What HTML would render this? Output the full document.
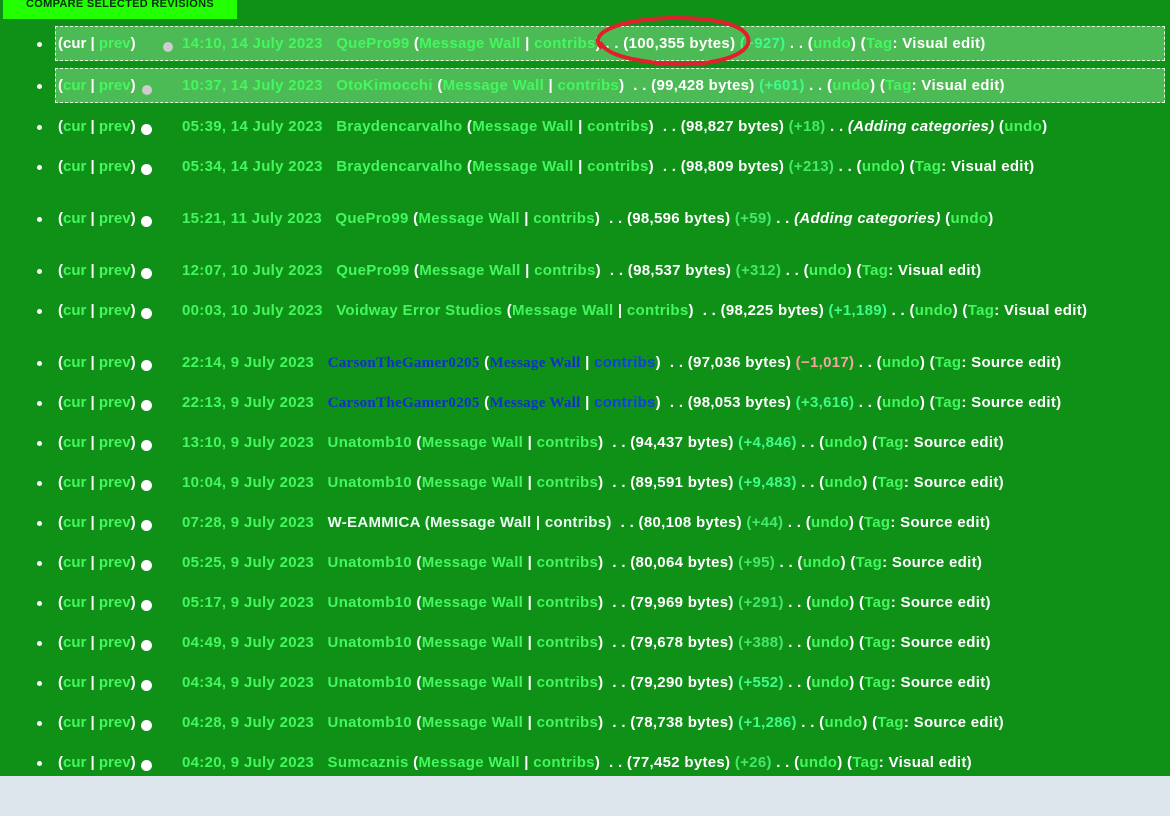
<!DOCTYPE html>
<html><head><meta charset="utf-8"><style>
body{margin:0;width:1170px;height:816px;background:#0f9118;overflow:hidden;position:relative;font-family:"Liberation Sans",sans-serif;font-size:15px;font-weight:bold;color:#fff;}
.btn{position:absolute;left:3px;top:-8px;width:234px;height:27px;background:#22ff00;font-size:11px;font-weight:bold;letter-spacing:.3px;text-align:center;line-height:24px;color:#063010}
.row{position:absolute;left:58px;height:22px;line-height:22px;white-space:nowrap;}
.b{position:absolute;left:-21px;top:9px;width:5px;height:5px;border-radius:50%;background:#fff}
.g{color:#44f75e}
.d{color:#3dfc8a;font-weight:bold}
.dn{color:#44e86a}
.r{position:absolute;left:83px;top:8px;width:11px;height:11px;border-radius:50%;background:#fff}
.t{position:absolute;left:124px;letter-spacing:0.3px}
.p{letter-spacing:0}
.hl{position:absolute;left:55px;width:1108px;height:33px;background:#4dbb55;border:1px dashed #e8ffe8}
.bot{position:absolute;left:0;top:776px;width:1170px;height:40px;background:#dde6ec}
.blue{color:#1030d0;font-family:"Liberation Serif",serif}
i{font-style:italic}
</style></head><body>
<div class="btn">COMPARE SELECTED REVISIONS</div>
<div class="hl" style="top:26px"></div>
<div class="hl" style="top:68px"></div>

<div class="row" style="top:33px"><span class="b"></span>(cur | <span class="g">prev</span>)<span class="r" style="left:105px;top:9px;width:10px;height:10px;background:#ccc"></span><span class="t"><span class="g">14:10, 14 July 2023&nbsp;&nbsp; QuePro99</span> (<span class="g">Message Wall</span> | <span class="g">contribs</span>) . . (100,355 bytes) <span class="d">(+927)</span> . . (<span class="g">undo</span>) (<span class="g">Tag</span>: Visual edit)</span></div>
<div class="row" style="top:75px"><span class="b"></span>(<span class="g">cur</span> | <span class="g">prev</span>)<span class="r" style="left:84px;top:10px;width:10px;height:10px;background:#ccc"></span><span class="t"><span class="g">10:37, 14 July 2023&nbsp;&nbsp; OtoKimocchi</span> (<span class="g">Message Wall</span> | <span class="g">contribs</span>) &nbsp;. . (99,428 bytes) <span class="d">(+601)</span> . . (<span class="g">undo</span>) (<span class="g">Tag</span>: Visual edit)</span></div>
<div class="row" style="top:116px"><span class="b"></span>(<span class="g">cur</span> | <span class="g">prev</span>)<span class="r"></span><span class="t"><span class="g">05:39, 14 July 2023&nbsp;&nbsp; Braydencarvalho</span> (<span class="g">Message Wall</span> | <span class="g">contribs</span>) &nbsp;. . (98,827 bytes) <span class="dn">(+18)</span> . . <i>(Adding categories)</i> (<span class="g">undo</span>)</span></div>
<div class="row" style="top:156px"><span class="b"></span>(<span class="g">cur</span> | <span class="g">prev</span>)<span class="r"></span><span class="t"><span class="g">05:34, 14 July 2023&nbsp;&nbsp; Braydencarvalho</span> (<span class="g">Message Wall</span> | <span class="g">contribs</span>) &nbsp;. . (98,809 bytes) <span class="dn">(+213)</span> . . (<span class="g">undo</span>) (<span class="g">Tag</span>: Visual edit)</span></div>
<div class="row" style="top:208px"><span class="b"></span>(<span class="g">cur</span> | <span class="g">prev</span>)<span class="r"></span><span class="t"><span class="g">15:21, 11 July 2023&nbsp;&nbsp; QuePro99</span> (<span class="g">Message Wall</span> | <span class="g">contribs</span>) &nbsp;. . (98,596 bytes) <span class="dn">(+59)</span> . . <i>(Adding categories)</i> (<span class="g">undo</span>)</span></div>
<div class="row" style="top:260px"><span class="b"></span>(<span class="g">cur</span> | <span class="g">prev</span>)<span class="r"></span><span class="t"><span class="g">12:07, 10 July 2023&nbsp;&nbsp; QuePro99</span> (<span class="g">Message Wall</span> | <span class="g">contribs</span>) &nbsp;. . (98,537 bytes) <span class="dn">(+312)</span> . . (<span class="g">undo</span>) (<span class="g">Tag</span>: Visual edit)</span></div>
<div class="row" style="top:300px"><span class="b"></span>(<span class="g">cur</span> | <span class="g">prev</span>)<span class="r"></span><span class="t"><span class="g">00:03, 10 July 2023&nbsp;&nbsp; Voidway Error Studios</span> (<span class="g">Message Wall</span> | <span class="g">contribs</span>) &nbsp;. . (98,225 bytes) <span class="d">(+1,189)</span> . . (<span class="g">undo</span>) (<span class="g">Tag</span>: Visual edit)</span></div>
<div class="row" style="top:352px"><span class="b"></span>(<span class="g">cur</span> | <span class="g">prev</span>)<span class="r"></span><span class="t"><span class="g">22:14, 9 July 2023</span>&nbsp;&nbsp; <span class="blue">CarsonTheGamer0205</span> (<span class="blue">Message Wall</span> | <b style="color:#1040e0">contribs</b>) &nbsp;. . (97,036 bytes) <b style="color:#f6a3a0">(−1,017)</b> . . (<span class="g">undo</span>) (<span class="g">Tag</span>: Source edit)</span></div>
<div class="row" style="top:392px"><span class="b"></span>(<span class="g">cur</span> | <span class="g">prev</span>)<span class="r"></span><span class="t"><span class="g">22:13, 9 July 2023</span>&nbsp;&nbsp; <span class="blue">CarsonTheGamer0205</span> (<span class="blue">Message Wall</span> | <b style="color:#1040e0">contribs</b>) &nbsp;. . (98,053 bytes) <span class="d">(+3,616)</span> . . (<span class="g">undo</span>) (<span class="g">Tag</span>: Source edit)</span></div>
<div class="row" style="top:432px"><span class="b"></span>(<span class="g">cur</span> | <span class="g">prev</span>)<span class="r"></span><span class="t"><span class="g">13:10, 9 July 2023&nbsp;&nbsp; Unatomb10</span> (<span class="g">Message Wall</span> | <span class="g">contribs</span>) &nbsp;. . (94,437 bytes) <span class="d">(+4,846)</span> . . (<span class="g">undo</span>) (<span class="g">Tag</span>: Source edit)</span></div>
<div class="row" style="top:472px"><span class="b"></span>(<span class="g">cur</span> | <span class="g">prev</span>)<span class="r"></span><span class="t"><span class="g">10:04, 9 July 2023&nbsp;&nbsp; Unatomb10</span> (<span class="g">Message Wall</span> | <span class="g">contribs</span>) &nbsp;. . (89,591 bytes) <span class="d">(+9,483)</span> . . (<span class="g">undo</span>) (<span class="g">Tag</span>: Source edit)</span></div>
<div class="row" style="top:512px"><span class="b"></span>(<span class="g">cur</span> | <span class="g">prev</span>)<span class="r"></span><span class="t"><span class="g">07:28, 9 July 2023</span>&nbsp;&nbsp; <b style="color:#e8fff0">W-EAMMICA (Message Wall | contribs)</b> &nbsp;. . (80,108 bytes) <span class="dn">(+44)</span> . . (<span class="g">undo</span>) (<span class="g">Tag</span>: Source edit)</span></div>
<div class="row" style="top:552px"><span class="b"></span>(<span class="g">cur</span> | <span class="g">prev</span>)<span class="r"></span><span class="t"><span class="g">05:25, 9 July 2023&nbsp;&nbsp; Unatomb10</span> (<span class="g">Message Wall</span> | <span class="g">contribs</span>) &nbsp;. . (80,064 bytes) <span class="dn">(+95)</span> . . (<span class="g">undo</span>) (<span class="g">Tag</span>: Source edit)</span></div>
<div class="row" style="top:592px"><span class="b"></span>(<span class="g">cur</span> | <span class="g">prev</span>)<span class="r"></span><span class="t"><span class="g">05:17, 9 July 2023&nbsp;&nbsp; Unatomb10</span> (<span class="g">Message Wall</span> | <span class="g">contribs</span>) &nbsp;. . (79,969 bytes) <span class="dn">(+291)</span> . . (<span class="g">undo</span>) (<span class="g">Tag</span>: Source edit)</span></div>
<div class="row" style="top:632px"><span class="b"></span>(<span class="g">cur</span> | <span class="g">prev</span>)<span class="r"></span><span class="t"><span class="g">04:49, 9 July 2023&nbsp;&nbsp; Unatomb10</span> (<span class="g">Message Wall</span> | <span class="g">contribs</span>) &nbsp;. . (79,678 bytes) <span class="dn">(+388)</span> . . (<span class="g">undo</span>) (<span class="g">Tag</span>: Source edit)</span></div>
<div class="row" style="top:672px"><span class="b"></span>(<span class="g">cur</span> | <span class="g">prev</span>)<span class="r"></span><span class="t"><span class="g">04:34, 9 July 2023&nbsp;&nbsp; Unatomb10</span> (<span class="g">Message Wall</span> | <span class="g">contribs</span>) &nbsp;. . (79,290 bytes) <span class="d">(+552)</span> . . (<span class="g">undo</span>) (<span class="g">Tag</span>: Source edit)</span></div>
<div class="row" style="top:712px"><span class="b"></span>(<span class="g">cur</span> | <span class="g">prev</span>)<span class="r"></span><span class="t"><span class="g">04:28, 9 July 2023&nbsp;&nbsp; Unatomb10</span> (<span class="g">Message Wall</span> | <span class="g">contribs</span>) &nbsp;. . (78,738 bytes) <span class="d">(+1,286)</span> . . (<span class="g">undo</span>) (<span class="g">Tag</span>: Source edit)</span></div>
<div class="row" style="top:752px"><span class="b"></span>(<span class="g">cur</span> | <span class="g">prev</span>)<span class="r"></span><span class="t"><span class="g">04:20, 9 July 2023&nbsp;&nbsp; Sumcaznis</span> (<span class="g">Message Wall</span> | <span class="g">contribs</span>) &nbsp;. . (77,452 bytes) <span class="dn">(+26)</span> . . (<span class="g">undo</span>) (<span class="g">Tag</span>: Visual edit)</span></div>

<svg style="position:absolute;left:580px;top:12px" width="180" height="60"><path d="M22 36 C 8 24, 30 8, 90 6 C 150 5, 172 18, 168 32 C 160 50, 110 56, 70 50 C 40 46, 25 40, 20 30" fill="none" stroke="#e0202a" stroke-width="4"/></svg>
<div class="bot"></div>
</body></html>
